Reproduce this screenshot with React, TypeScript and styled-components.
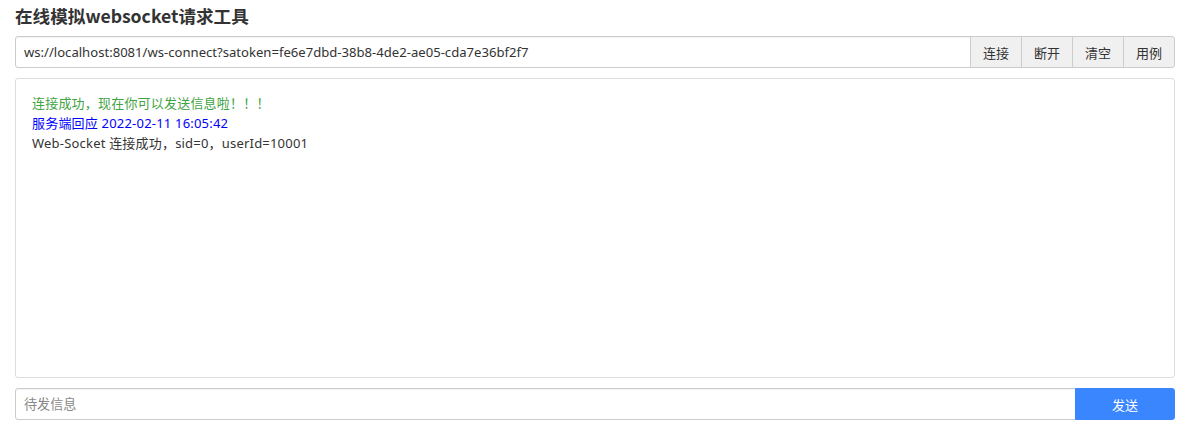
import React, { useState } from "react";
import styled, { createGlobalStyle } from "styled-components";

const GlobalStyle = createGlobalStyle`
  html, body {
    margin: 0;
    padding: 0;
    background: #fff;
    font-family: "Noto Sans", "Noto Sans CJK SC", sans-serif;
    color: #333;
  }
  * { box-sizing: border-box; }
`;

const logs = [
  { kind: "ok", text: "连接成功，现在你可以发送信息啦！！！" },
  { kind: "server", text: "服务端回应 2022-02-11 16:05:42" },
  { kind: "plain", text: "Web-Socket 连接成功，sid=0，userId=10001" },
];

export default function App() {
  const [url, setUrl] = useState(
    "ws://localhost:8081/ws-connect?satoken=fe6e7dbd-38b8-4de2-ae05-cda7e36bf2f7"
  );
  const [msg, setMsg] = useState("");

  return (
    <Page>
      <GlobalStyle />
      <Title>在线模拟websocket请求工具</Title>
      <Group>
        <UrlInput value={url} onChange={(e) => setUrl(e.target.value)} />
        <AddonButton>连接</AddonButton>
        <AddonButton>断开</AddonButton>
        <AddonButton>清空</AddonButton>
        <AddonButton last>用例</AddonButton>
      </Group>
      <LogBox>
        {logs.map((l, i) => (
          <LogLine key={i} kind={l.kind}>
            {l.text}
          </LogLine>
        ))}
      </LogBox>
      <Group>
        <UrlInput
          placeholder="待发信息"
          value={msg}
          onChange={(e) => setMsg(e.target.value)}
        />
        <SendButton>发送</SendButton>
      </Group>
    </Page>
  );
}

const Page = styled.div`
  padding: 3px 18px 8px 15px;
  display: flex;
  flex-direction: column;
`;

const Title = styled.h1`
  margin: 0 0 7px 0;
  height: 26px;
  line-height: 26px;
  font-size: 17.6px;
  font-weight: bold;
  color: #333;
  font-family: "Noto Sans CJK SC", "Noto Sans", sans-serif;
`;

const Group = styled.div`
  display: flex;
  height: 32px;
`;

const UrlInput = styled.input`
  flex: 1;
  min-width: 0;
  height: 32px;
  padding: 0 8px;
  border: 1px solid #ccc;
  border-radius: 3px 0 0 3px;
  font-size: 13.1px;
  font-family: "Noto Sans", "Noto Sans CJK SC", sans-serif;
  color: #333;
  outline: none;
  box-shadow: inset 0 1px 1px rgba(0, 0, 0, 0.05);

  &::placeholder {
    color: #888;
  }
`;

const AddonButton = styled.button<{ last?: boolean }>`
  width: 52px;
  height: 32px;
  margin-left: -1px;
  background: #f0f0f0;
  border: 1px solid #ccc;
  border-radius: ${(p) => (p.last ? "0 3px 3px 0" : "0")};
  font-size: 13px;
  color: #333;
  font-family: "Noto Sans CJK SC", sans-serif;
  cursor: pointer;
  padding: 0;
`;

const LogBox = styled.div`
  margin: 10px 0;
  height: 300px;
  border: 1px solid #ddd;
  border-radius: 3px;
  padding: 14px 16px;
  font-size: 13px;
  letter-spacing: 0.2px;
  line-height: 20px;
`;

const LogLine = styled.div<{ kind: string }>`
  color: ${(p) =>
    p.kind === "ok" ? "#3fa33f" : p.kind === "server" ? "#0000ff" : "#333"};
`;

const SendButton = styled.button`
  width: 100px;
  height: 32px;
  margin-left: -1px;
  background: #3a86ff;
  border: 1px solid #3a86ff;
  border-radius: 0 3px 3px 0;
  color: #fff;
  font-size: 13px;
  font-family: "Noto Sans CJK SC", sans-serif;
  cursor: pointer;
`;
